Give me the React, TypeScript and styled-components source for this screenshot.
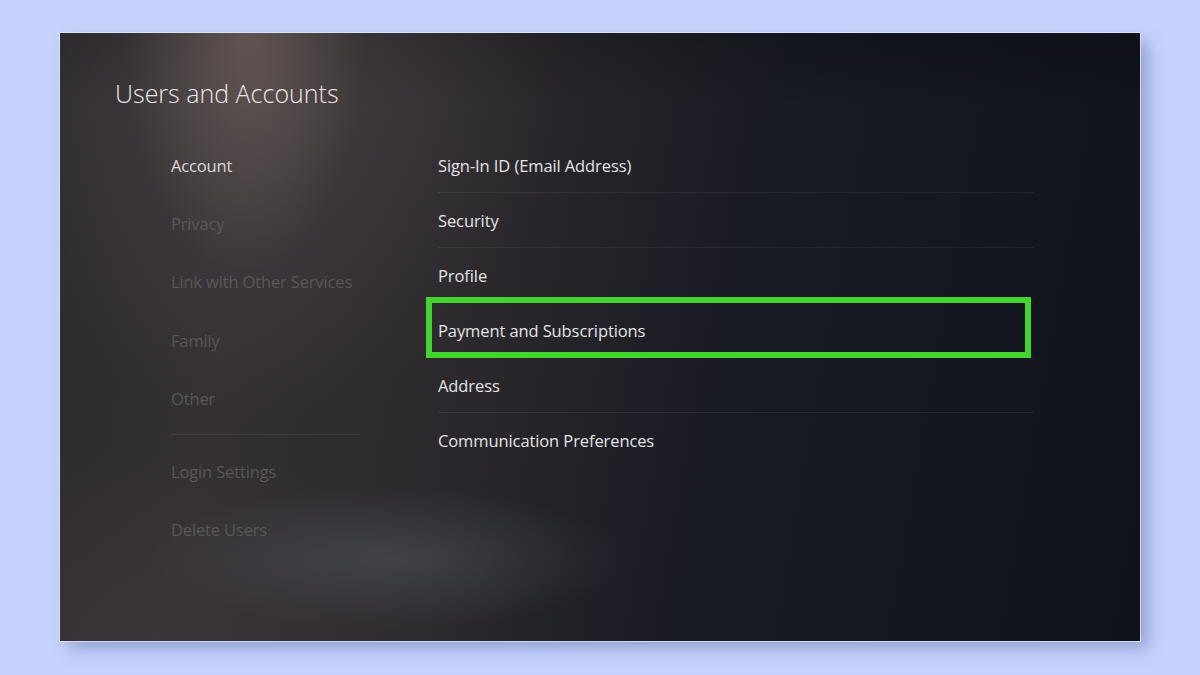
import React from 'react';
import styled, { createGlobalStyle } from 'styled-components';

const GlobalStyle = createGlobalStyle`
	html, body {
		margin: 0;
		padding: 0;
		background: #c6d4fc;
	}
	body {
		font-family: 'Open Sans', 'Noto Sans', sans-serif;
		width: 1200px;
		height: 675px;
		overflow: hidden;
	}
`;

const Page = styled.div`
	width: 1200px;
	height: 675px;
	padding: 33px 0 0 60px;
	box-sizing: border-box;
	background: #c6d4fc;
`;

const Screen = styled.div`
	width: 1080px;
	height: 608px;
	box-sizing: border-box;
	padding: 44px 0 0 55px;
	outline: 1px solid rgba(230, 236, 255, 0.7);
	box-shadow: 8px 8px 16px rgba(70, 85, 150, 0.4);
	background:
		radial-gradient(ellipse 120px 240px at 185px 0px, rgba(150, 130, 122, 0.35), transparent 100%),
		radial-gradient(ellipse 300px 380px at 200px 10px, rgba(110, 95, 92, 0.35), transparent 100%),
		radial-gradient(ellipse 240px 70px at 330px 525px, rgba(90, 102, 108, 0.4), transparent 100%),
		radial-gradient(ellipse 420px 180px at 80px 600px, rgba(75, 62, 68, 0.35), transparent 100%),
		linear-gradient(180deg, rgba(0, 0, 0, 0.18) 0%, transparent 12%),
		linear-gradient(100deg, #2c2a2e 0%, #343034 18%, #2a282c 40%, #181a24 62%, #10121c 100%);
	color: #e6e4e4;
`;

const Title = styled.h1`
	margin: 0;
	font-size: 25px;
	line-height: 32px;
	font-weight: 300;
	color: #ece8e6;
`;

const Columns = styled.div`
	display: flex;
	margin-top: 27px;
`;

const Nav = styled.nav`
	width: 189px;
	margin-left: 56px;
	display: flex;
	flex-direction: column;
`;

const NavItem = styled.div<{ active?: boolean }>`
	height: 58.3px;
	display: flex;
	align-items: center;
	font-size: 16.5px;
	letter-spacing: -0.15px;
	color: ${({ active }) => (active ? '#dcd8d8' : '#5a5659')};
`;

const NavDivider = styled.div`
	height: 1px;
	margin: 7px 0;
	background: rgba(255, 255, 255, 0.07);
`;

const List = styled.div`
	width: 596px;
	margin-left: 78px;
	margin-top: 2px;
	display: flex;
	flex-direction: column;
`;

const Row = styled.div<{ last?: boolean }>`
	position: relative;
	height: 55px;
	box-sizing: border-box;
	display: flex;
	align-items: center;
	font-size: 16.5px;
	letter-spacing: -0.1px;
	color: #e4e4e6;
	border-bottom: ${({ last }) => (last ? 'none' : '1px solid rgba(255, 255, 255, 0.07)')};
`;

const Highlight = styled.div`
	position: absolute;
	top: -6px;
	left: -12px;
	right: 3px;
	bottom: -1px;
	border: 6px solid #42d52e;
	pointer-events: none;
`;

const navItems = ['Account', 'Privacy', 'Link with Other Services', 'Family', 'Other'];
const navExtra = ['Login Settings', 'Delete Users'];

const rows = [
	'Sign-In ID (Email Address)',
	'Security',
	'Profile',
	'Payment and Subscriptions',
	'Address',
	'Communication Preferences',
];

const App = () => {
	return (
		<Page>
			<GlobalStyle />
			<Screen>
				<Title>Users and Accounts</Title>
				<Columns>
					<Nav>
						{navItems.map((item, i) => (
							<NavItem key={item} active={i === 0}>
								{item}
							</NavItem>
						))}
						<NavDivider />
						{navExtra.map((item) => (
							<NavItem key={item}>{item}</NavItem>
						))}
					</Nav>
					<List>
						{rows.map((row, i) => (
							<Row key={row} last={i === rows.length - 1}>
								{row}
								{row === 'Payment and Subscriptions' && <Highlight />}
							</Row>
						))}
					</List>
				</Columns>
			</Screen>
		</Page>
	);
};

export default App;
